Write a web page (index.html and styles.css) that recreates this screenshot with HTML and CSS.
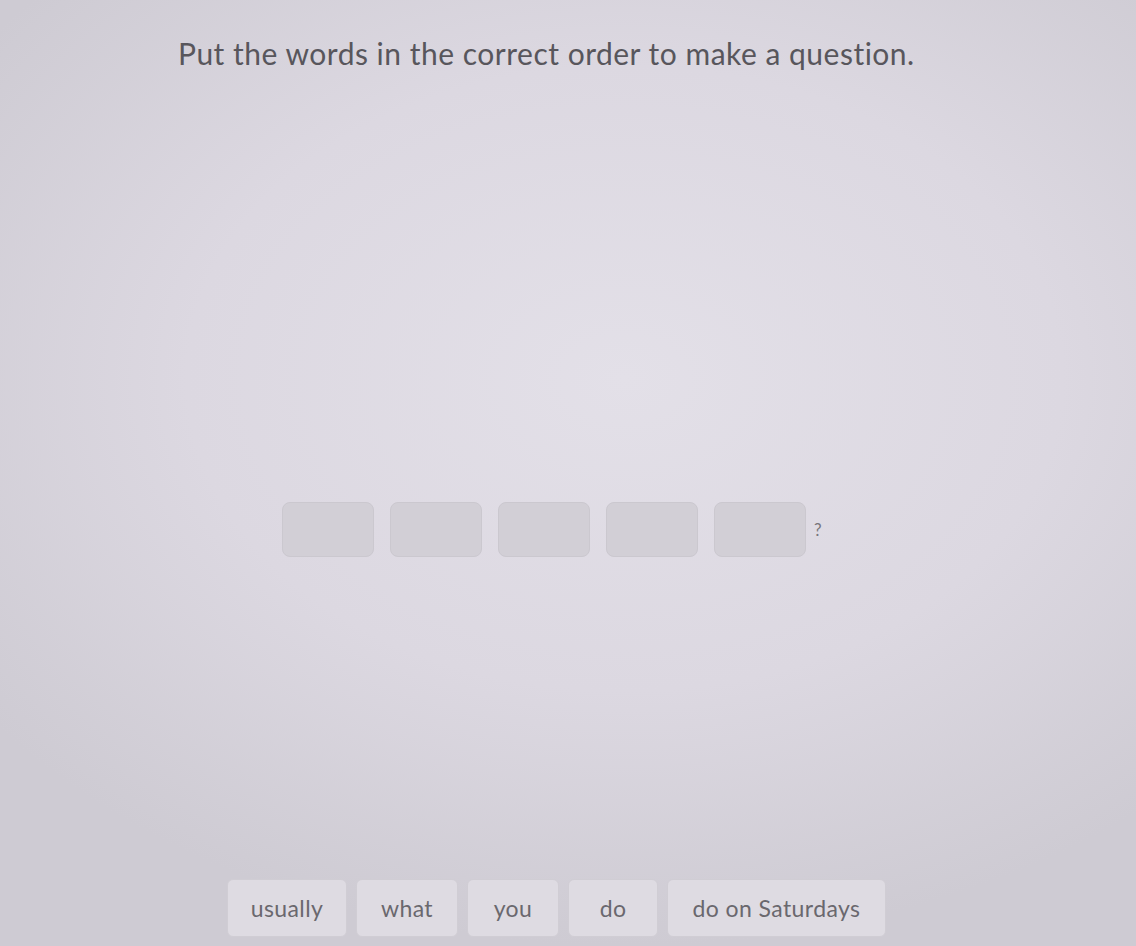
FILE: index.html
```html
<!DOCTYPE html>
<html>
<head>
<meta charset="utf-8">
<link rel="stylesheet" href="styles.css">
</head>
<body>
<div class="page">
  <h1 class="title">Put the words in the correct order to make a question.</h1>
  <div class="answer">
    <div class="slot"></div>
    <div class="slot"></div>
    <div class="slot"></div>
    <div class="slot"></div>
    <div class="slot"></div>
    <span class="qmark">?</span>
  </div>
  <div class="words">
    <div class="tile t1">usually</div>
    <div class="tile t2">what</div>
    <div class="tile t3">you</div>
    <div class="tile t4">do</div>
    <div class="tile t5">do on Saturdays</div>
  </div>
</div>
</body>
</html>
```
FILE: styles.css
```css
html, body {
  margin: 0;
  padding: 0;
}
body {
  width: 1136px;
  height: 946px;
  overflow: hidden;
  font-family: "Lato", "Open Sans", sans-serif;
  background: radial-gradient(ellipse 70% 60% at 55% 40%, #e3e0e8 0%, #dcd8e1 55%, #cecbd3 100%);
}
.page {
  display: flex;
  flex-direction: column;
  height: 946px;
}
.title {
  margin: 35px 0 0 178px;
  font-size: 30px;
  font-weight: 400;
  color: #58565c;
  letter-spacing: 0.5px;
  line-height: 36px;
}
.answer {
  display: flex;
  align-items: center;
  gap: 16px;
  margin: 431px 0 0 282px;
}
.slot {
  width: 92px;
  height: 55px;
  border-radius: 8px;
  background: #d2cfd6;
  border: 1px solid #cbc8cf;
  box-sizing: border-box;
}
.qmark {
  margin-left: -8px;
  font-size: 17px;
  color: #77757b;
}
.words {
  display: flex;
  gap: 9px;
  margin: 322px 0 0 227px;
}
.tile {
  height: 58px;
  display: flex;
  align-items: center;
  justify-content: center;
  border-radius: 6px;
  background: #dedbe2;
  border: 1px solid #d0cdd4;
  box-sizing: border-box;
  font-size: 23px;
  letter-spacing: 0.4px;
  color: #6a686e;
}
.t1 { width: 120px; }
.t2 { width: 102px; }
.t3 { width: 92px; }
.t4 { width: 90px; }
.t5 { width: 219px; }
```
